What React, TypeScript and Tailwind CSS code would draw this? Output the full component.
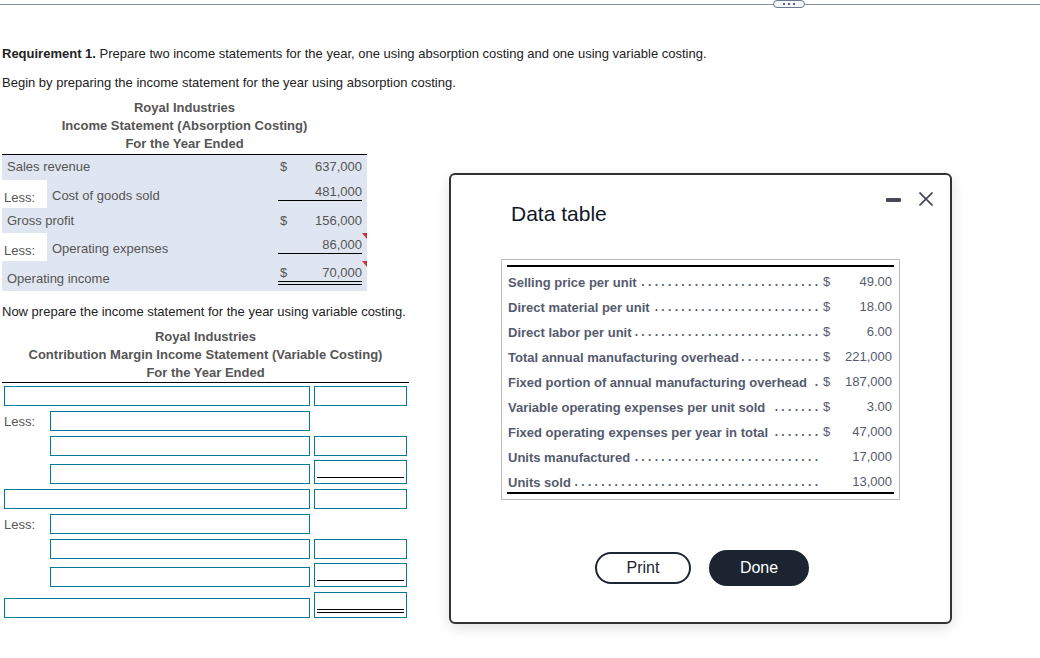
const rows = [
  { label: "Selling price per unit", dots: 27, sign: "$", value: "49.00" },
  { label: "Direct material per unit", dots: 25, sign: "$", value: "18.00" },
  { label: "Direct labor per unit", dots: 28, sign: "$", value: "6.00" },
  { label: "Total annual manufacturing overhead", dots: 12, sign: "$", value: "221,000" },
  { label: "Fixed portion of annual manufacturing overhead", dots: 1, sign: "$", value: "187,000" },
  { label: "Variable operating expenses per unit sold", dots: 7, sign: "$", value: "3.00" },
  { label: "Fixed operating expenses per year in total", dots: 7, sign: "$", value: "47,000" },
  { label: "Units manufactured", dots: 28, sign: "", value: "17,000" },
  { label: "Units sold", dots: 37, sign: "", value: "13,000" },
];

function Corner({ className }: { className: string }) {
  return (
    <svg className={`absolute right-0 ${className}`} width="5" height="6" viewBox="0 0 5 6">
      <path d="M0 0H5V6Z" fill="#c8323a" />
    </svg>
  );
}

function Heading({ lines }: { lines: string[] }) {
  return (
    <div className="text-center text-[13px] font-bold leading-[18px] text-[#555]">
      {lines.map((l) => (
        <div key={l}>{l}</div>
      ))}
    </div>
  );
}

function Box({ className = "" }: { className?: string }) {
  return <div className={`h-[20px] border border-[#007a9b] ${className}`} />;
}

// one row of the empty variable costing form
function FormRow({
  less,
  indent,
  right,
  tall,
  gap = "mt-[5px]",
}: {
  less?: boolean;
  indent?: boolean;
  right?: "plain" | "single" | "double";
  tall?: string;
  gap?: string;
}) {
  return (
    <div className={`flex items-end ${gap}`}>
      {indent ? (
        <div className="flex w-[48px] shrink-0 self-center pl-[2px] pt-[2px] leading-[18px]">{less ? "Less:" : ""}</div>
      ) : (
        <div className="w-[2px] shrink-0" />
      )}
      <Box className={indent ? "w-[260px]" : "w-[306px]"} />
      {right && (
        <div className={`ml-[4px] flex w-[93px] flex-col justify-end border border-[#007a9b] px-[2px] ${tall ?? "h-[20px]"}`}>
          {right === "single" && <div className="mb-[5px] border-b border-black" />}
          {right === "double" && <div className="mb-[4px] h-[4px] border-y border-black" />}
        </div>
      )}
    </div>
  );
}

export default function App() {
  return (
    <div className="relative h-[658px] w-[1040px] overflow-hidden bg-white font-['Liberation_Sans',Arial,sans-serif] text-[13px] text-[#555]">
      <div className="mt-[4px] h-px bg-[#8c93a6]" />
      {/* expand pill on the divider */}
      <div className="absolute left-[773px] top-0 flex h-[8px] w-[32px] items-center justify-center gap-[3px] rounded-full border border-[#6b7a90] bg-[#f2f4f7]">
        <span className="h-[2px] w-[2px] bg-[#5a6478]" />
        <span className="h-[2px] w-[2px] bg-[#5a6478]" />
        <span className="h-[2px] w-[2px] bg-[#5a6478]" />
      </div>

      <div className="ml-[2px] w-[720px] pt-[40px] leading-[18px] text-[#222]">
        <p>
          <span className="font-bold">Requirement 1.</span> Prepare two income statements for the year, one using absorption costing and one using variable costing.
        </p>
        <p className="mt-[11px]">Begin by preparing the income statement for the year using absorption costing.</p>
      </div>

      <div className="ml-[2px] mt-[7px] w-[365px]">
        <Heading lines={["Royal Industries", "Income Statement (Absorption Costing)", "For the Year Ended"]} />
        <div className="relative mt-[1px] border-t border-black bg-[#e0e6f1]">
          <div className="flex h-[25px] items-center pb-[2px] pl-[5px] pr-[5px]">
            <span className="flex-1">Sales revenue</span>
            <div className="flex w-[84px] justify-between pl-[2px]">
              <span>$</span>
              <span>637,000</span>
            </div>
          </div>
          <div className="flex h-[28px] items-start pr-[5px]">
            <div className="h-full w-[45px] bg-white pl-[2px] pt-[8px]">Less:</div>
            <span className="flex-1 pl-[5px] pt-[6px]">Cost of goods sold</span>
            <div className="flex h-[21px] w-[84px] items-center justify-end border-b border-black pt-[4px]">481,000</div>
          </div>
          <div className="flex h-[25px] items-center pl-[5px] pr-[5px]">
            <span className="flex-1">Gross profit</span>
            <div className="flex w-[84px] justify-between pl-[2px]">
              <span>$</span>
              <span>156,000</span>
            </div>
          </div>
          <div className="flex h-[28px] items-start pr-[5px]">
            <div className="h-full w-[45px] bg-white pl-[2px] pt-[8px]">Less:</div>
            <span className="flex-1 pl-[5px] pt-[6px]">Operating expenses</span>
            <div className="flex h-[21px] w-[84px] items-center justify-end border-b border-black pt-[4px]">86,000</div>
          </div>
          <div className="flex h-[30px] items-start pr-[5px]">
            <span className="flex-1 pl-[5px] pt-[8px]">Operating income</span>
            <div className="flex h-[24px] w-[84px] items-center justify-between border-b-4 border-double border-black pl-[2px] pt-[4px]">
              <span>$</span>
              <span>70,000</span>
            </div>
          </div>
          <Corner className="top-[78px]" />
          <Corner className="top-[106px]" />
        </div>
      </div>

      <p className="ml-[2px] mt-[12px] leading-[18px] text-[#222]">Now prepare the income statement for the year using variable costing.</p>

      <div className="ml-[2px] mt-[7px] w-[407px]">
        <Heading lines={["Royal Industries", "Contribution Margin Income Statement (Variable Costing)", "For the Year Ended"]} />
        <div className="border-t border-black">
          <FormRow right="plain" gap="mt-[3px]" />
          <FormRow less indent />
          <FormRow indent right="plain" />
          <FormRow indent right="single" tall="h-[24px]" gap="mt-[4px]" />
          <FormRow right="plain" />
          <FormRow less indent />
          <FormRow indent right="plain" />
          <FormRow indent right="single" tall="h-[24px]" gap="mt-[4px]" />
          <FormRow right="double" tall="h-[26px]" />
        </div>
      </div>

      {/* data table dialog */}
      <div className="absolute left-[449px] top-[173px] h-[451px] w-[503px] rounded-[6px] border-2 border-[#333] bg-white shadow-[0_4px_14px_rgba(0,0,0,0.12)]">
        <div className="absolute left-[435px] top-[23px] h-[4px] w-[15px] rounded-[1px] bg-[#444a55]" />
        <svg className="absolute left-[468px] top-[17px]" width="14" height="14" viewBox="0 0 14 14">
          <path d="M0.5 0.5L13.5 13.5M13.5 0.5L0.5 13.5" stroke="#3f4652" strokeWidth="1.6" fill="none" />
        </svg>
        <div className="pl-[60px] pt-[26px] text-[21px] leading-[26px] text-[#111827]">Data table</div>
        <div className="ml-[50px] mt-[32px] h-[241px] w-[399px] border border-[#bbb] p-[5px]">
          <div className="h-[229px] border-y-2 border-black pt-[3px]">
            {rows.map((r) => (
              <div key={r.label} className="flex h-[25px] items-start leading-[25px] last:h-[22px]">
                <div className="flex w-[311px] justify-between overflow-hidden whitespace-nowrap pl-[1px] font-bold text-[#555b6e]">
                  <span>{r.label}</span>
                  <span className="text-[12px]">{". ".repeat(r.dots).trim()}</span>
                </div>
                <span className="ml-[5px] w-[14px] -translate-y-[1px] text-[#555b6e]">{r.sign}</span>
                <span className="-translate-y-[1px] w-[55px] text-right text-[#555b6e]">{r.value}</span>
              </div>
            ))}
          </div>
        </div>
        <div className="mt-[50px] flex items-center justify-center gap-[18px] pl-[3px] text-[16px]">
          <div className="flex h-[32px] w-[96px] items-center justify-center rounded-full border-2 border-[#1e2533] text-[#1e2533]">Print</div>
          <div className="flex h-[36px] w-[100px] items-center justify-center rounded-full bg-[#1c2331] text-white">Done</div>
        </div>
      </div>
    </div>
  );
}
